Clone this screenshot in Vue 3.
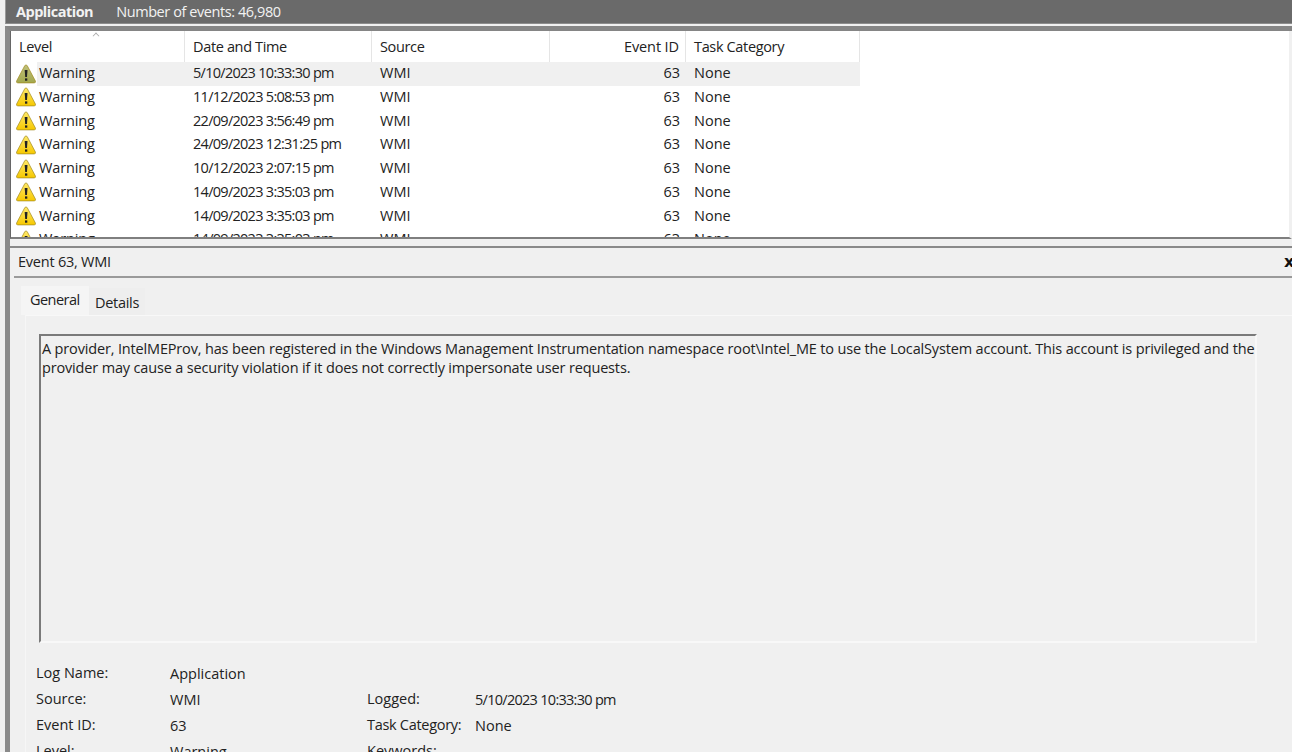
<script setup>
const rows = [
  { date: '5/10/2023 10:33:30 pm', selected: true },
  { date: '11/12/2023 5:08:53 pm' },
  { date: '22/09/2023 3:56:49 pm' },
  { date: '24/09/2023 12:31:25 pm' },
  { date: '10/12/2023 2:07:15 pm' },
  { date: '14/09/2023 3:35:03 pm' },
  { date: '14/09/2023 3:35:03 pm' },
  { date: '14/09/2023 3:35:03 pm' },
]
</script>

<template>
  <div class="app">
    <header class="topbar">
      <strong>Application</strong>
      <span>Number of events: 46,980</span>
    </header>
    <div class="body">
      <section class="list">
        <div class="list-inner">
          <div class="head">
            <div class="c level">Level<i class="caret"></i></div>
            <div class="c date">Date and Time</div>
            <div class="c source">Source</div>
            <div class="c id">Event ID</div>
            <div class="c cat">Task Category</div>
          </div>
          <div v-for="(r, i) in rows" :key="i" class="item">
            <svg class="warn" viewBox="0 0 20 20">
              <defs>
                <linearGradient id="wy" x1="0" y1="0" x2="0" y2="1">
                  <stop offset="0" stop-color="#ffe96a" />
                  <stop offset="1" stop-color="#f6c800" />
                </linearGradient>
                <linearGradient id="wg" x1="0" y1="0" x2="0" y2="1">
                  <stop offset="0" stop-color="#bfc07a" />
                  <stop offset="1" stop-color="#a3a84e" />
                </linearGradient>
              </defs>
              <path d="M8.8 1.6 Q10 .2 11.2 1.6 L19.4 17 Q20 18.8 18.2 18.9 L1.8 18.9 Q0 18.8 .6 17 Z" :fill="r.selected ? 'url(#wg)' : 'url(#wy)'" stroke="#a08a20" stroke-width=".7" />
              <path d="M8.7 6 H11.5 L11 13 H9.2 Z" fill="#222" />
              <rect x="9" y="14.4" width="2.3" height="2.3" fill="#222" />
            </svg>
            <div class="rowtext" :class="{ sel: r.selected }">
              <div class="c level2">Warning</div>
              <div class="c date numeric">{{ r.date }}</div>
              <div class="c source">WMI</div>
              <div class="c id">63</div>
              <div class="c cat">None</div>
            </div>
          </div>
        </div>
      </section>
      <section class="detail">
        <div class="title"><span>Event 63, WMI</span><b class="close">x</b></div>
        <div class="tabs">
          <div class="tab active">General</div>
          <div class="tab">Details</div>
        </div>
        <div class="page">
          <div class="msg">A provider, IntelMEProv, has been registered in the Windows Management Instrumentation namespace root\Intel_ME to use the LocalSystem account. This account is privileged and the provider may cause a security violation if it does not correctly impersonate user requests.</div>
          <div class="meta">
            <div class="k">Log Name:</div><div class="v">Application</div><div></div><div></div>
            <div class="k">Source:</div><div class="v">WMI</div><div class="k">Logged:</div><div class="v numeric">5/10/2023 10:33:30 pm</div>
            <div class="k">Event ID:</div><div class="v">63</div><div class="k tight">Task Category:</div><div class="v">None</div>
            <div class="k">Level:</div><div class="v">Warning</div><div class="k">Keywords:</div><div class="v"></div>
          </div>
        </div>
      </section>
    </div>
  </div>
</template>

<style>
html, body { margin: 0; overflow: hidden; background: #f0f0f0; }
</style>

<style scoped>
.app {
  width: 1292px; height: 752px; overflow: hidden; box-sizing: border-box;
  padding-left: 5px; background: #f0f0f0; color: #222;
  font: 14.5px/24px "Open Sans", "Noto Sans", sans-serif;
  display: flex; flex-direction: column;
}
.topbar {
  height: 24px; padding-left: 10px; flex: none; box-sizing: border-box;
  background: #6a6a6a; color: #f2f2f2; display: flex; gap: 23px; line-height: 23px;
  border-left: 1px solid #9a9a9a; border-bottom: 1px solid #8c8c8c;
}
.topbar strong { font-weight: 700; letter-spacing: -.5px; }
.topbar span { letter-spacing: -.42px; }
.body {
  flex: 1; min-height: 0; margin-top: 2px;
  border-left: 5px solid #8a8a8a; border-top: 5px solid #858585;
  display: flex; flex-direction: column;
}
.list {
  height: 208px; flex: none; background: #fff; box-sizing: border-box;
  border-bottom: 2px solid #7f7f7f; border-left: 1px solid #666; border-right: 3px solid #f0f0f0;
  overflow: hidden;
}
.list-inner { width: 849px; }
.head { display: flex; height: 31px; }
.head .c { line-height: 31px; border-right: 1px solid #e5e5e5; position: relative; letter-spacing: -.35px; }
.head .id { letter-spacing: -.1px; }
.caret {
  position: absolute; left: 82px; top: 2px; width: 5px; height: 5px;
  border-left: 1px solid #aaa; border-top: 1px solid #aaa; transform: rotate(45deg) scale(.8);
}
.c { box-sizing: border-box; padding-left: 8px; white-space: nowrap; }
.numeric { letter-spacing: -.72px; }
.level { width: 174px; }
.level2 { width: 148px; padding-left: 2px; letter-spacing: -.15px; }
.date { width: 187px; }
.source { width: 178px; }
.id { width: 136px; text-align: right; padding-right: 6px; }
.cat { width: 174px; }
.item { display: flex; height: 23.75px; position: relative; padding-left: 26px; }
.rowtext { display: flex; flex: 1; line-height: 22px; }
.rowtext.sel { background: #f0f0f0; }
.warn { position: absolute; left: 5px; top: 1.5px; width: 20px; height: 20px; }
.detail { flex: 1; min-height: 0; margin-top: 7px; border-top: 2px solid #8a8a8a; }
.title {
  height: 28px; line-height: 28px; border-bottom: 2px solid #9a9a9a; margin-left: 4px; padding-left: 4px;
  display: flex; justify-content: space-between; letter-spacing: -.23px;
}
.close { font: 700 16px/27px "DejaVu Sans", sans-serif; margin-right: -2px; color: #111; }
.tabs { display: flex; margin-left: 11px; margin-top: 8px; height: 29px; }
.tab { padding: 3px 6px 0; width: 56px; box-sizing: border-box; line-height: 24px; background: #eee; margin-top: 2px; height: 27px; letter-spacing: -.3px; }
.tab.active { padding: 2px 9px 0; width: 68px; background: #f5f5f5; margin-top: 0; height: 29px; letter-spacing: -.55px; }
.page { margin-left: 15px; border-top: 1px solid #f8f8f8; border-left: 1px solid #f6f6f6; padding: 18px 0 0 13px; }
.msg {
  width: 1218px; height: 309px; box-sizing: border-box; padding: 4px 0 0 1px;
  line-height: 18.5px; letter-spacing: -.16px;
  border-top: 2px solid #7a7a7a; border-left: 2px solid #7a7a7a;
  border-right: 2px solid #f8f8f8; border-bottom: 2px solid #f8f8f8;
}
.meta {
  display: grid; grid-template-columns: 134px 197px 108px 1fr; grid-auto-rows: 26px;
  margin: 18px 0 0 -3px; line-height: 26px;
}
.k { margin-top: -1px; }
.tight { letter-spacing: -.3px; }
</style>
